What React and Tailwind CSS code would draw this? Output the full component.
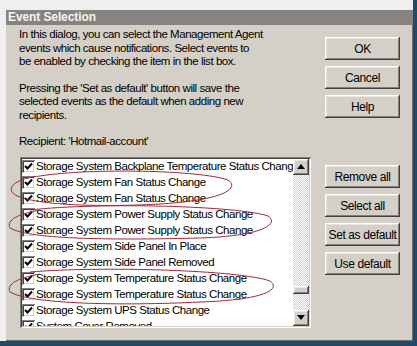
import React from "react";

const rows = [
  "Storage System Backplane Temperature Status Change",
  "Storage System Fan Status Change",
  "Storage System Fan Status Change",
  "Storage System Power Supply Status Change",
  "Storage System Power Supply Status Change",
  "Storage System Side Panel In Place",
  "Storage System Side Panel Removed",
  "Storage System Temperature Status Change",
  "Storage System Temperature Status Change",
  "Storage System UPS Status Change",
  "System Cover Removed",
];

const raised =
  "bg-[#d4d0c8] shadow-[inset_-1px_-1px_#404040,inset_1px_1px_#ffffff,inset_-2px_-2px_#808080,inset_2px_2px_#e8e6e2]";

function Btn({ children }) {
  return (
    <div className={`w-[75px] h-[23px] flex items-center justify-center text-[12px] tracking-[-0.4px] text-black ${raised}`}>
      {children}
    </div>
  );
}

function Check() {
  return (
    <div className="w-[13px] h-[13px] shrink-0 bg-white shadow-[inset_1px_1px_#808080,inset_-1px_-1px_#ffffff,inset_2px_2px_#404040,inset_-2px_-2px_#d4d0c8] flex items-center justify-center">
      <svg width="9" height="9" viewBox="0 0 9 9">
        <path d="M1 4 L3.5 6.5 L8 1.5" stroke="#000" strokeWidth="2" fill="none" />
      </svg>
    </div>
  );
}

function Arrow({ up }) {
  return (
    <div className={`w-[16px] h-[16px] shrink-0 flex items-center justify-center ${raised}`}>
      <svg width="8" height="5" viewBox="0 0 8 5">
        {up ? <path d="M0 5 L4 0 L8 5 Z" fill="#000" /> : <path d="M0 0 L8 0 L4 5 Z" fill="#000" />}
      </svg>
    </div>
  );
}

const bodyText = "text-[11.5px] tracking-[-0.45px] leading-[13.5px] whitespace-nowrap";

export default function App() {
  return (
    <div
      className="w-[417px] h-[346px] bg-[#1d4b69] relative overflow-hidden"
      style={{ fontFamily: '"Liberation Sans", Arial, sans-serif' }}
    >
      <div className="w-[413px] h-[341px] bg-[#efefef] pl-[6px] pt-[10px] flex flex-col">
        <div className="h-[15px] bg-[#868380] text-[#f4f4f4] font-bold text-[12px] tracking-[-0.1px] leading-[15px] pl-[2px]">
          Event Selection
        </div>
        <div className="flex-1 bg-[#d4d0c8] border-r border-b border-[#6f6d6a] flex text-black">
          <div className="w-[306px] pl-[13px] pt-[3px] flex flex-col">
            <div className="w-[252px] overflow-hidden">
              <p className={bodyText}>In this dialog, you can select the Management Agent</p>
              <p className={bodyText}>events which cause notifications. Select events to</p>
              <p className={bodyText}>be enabled by checking the item in the list box.</p>
              <p className={`${bodyText} mt-[13px]`}>Pressing the 'Set as default' button will save the</p>
              <p className={bodyText}>selected events as the default when adding new</p>
              <p className={bodyText}>recipients.</p>
              <p className={`${bodyText} mt-[13px]`}>Recipient: 'Hotmail-account'</p>
            </div>
            <div className="mt-[8px] ml-[1px] w-[291px] h-[171px] bg-white shadow-[inset_1px_1px_#808080,inset_-1px_-1px_#ffffff,inset_2px_2px_#404040,inset_-2px_-2px_#d4d0c8] p-[2px] flex">
              <div className="flex-1 overflow-hidden">
                {rows.map((r, i) => (
                  <div key={i} className="h-[16px] flex items-center gap-[1px] whitespace-nowrap text-[11.5px] tracking-[-0.45px]">
                    <Check />
                    <span>{r}</span>
                  </div>
                ))}
              </div>
              <div className="w-[16px] shrink-0 flex flex-col bg-[repeating-conic-gradient(#d4d0c8_0_25%,#ffffff_0_50%)] bg-[length:2px_2px]">
                <Arrow up />
                <div className="flex-1" />
                <div className={`h-[8px] ${raised}`} />
                <div className="h-[16px]" />
                <Arrow />
              </div>
            </div>
          </div>
          <div className="ml-[13px] pt-[12px] flex flex-col gap-[6px]">
            <Btn>OK</Btn>
            <Btn>Cancel</Btn>
            <Btn>Help</Btn>
            <div className="h-[35px]" />
            <Btn>Remove all</Btn>
            <Btn>Select all</Btn>
            <Btn>Set as default</Btn>
            <Btn>Use default</Btn>
          </div>
        </div>
      </div>
      <svg className="absolute inset-0 pointer-events-none" width="417" height="346" viewBox="0 0 417 346">
        <g fill="none" stroke="#9b2a3a" strokeWidth="1">
          <path d="M40 176 C90 168 200 170 228 180 C240 188 225 200 160 204 C90 208 20 204 12 192 C8 184 22 178 40 176" />
          <path d="M30 210 C100 202 240 206 268 216 C280 224 262 236 200 238 C120 240 30 240 10 228 C6 220 18 214 40 210" />
          <path d="M30 272 C100 266 240 270 270 281 C282 290 262 300 200 302 C120 306 30 304 10 292 C6 284 18 278 40 274" />
        </g>
      </svg>
    </div>
  );
}
